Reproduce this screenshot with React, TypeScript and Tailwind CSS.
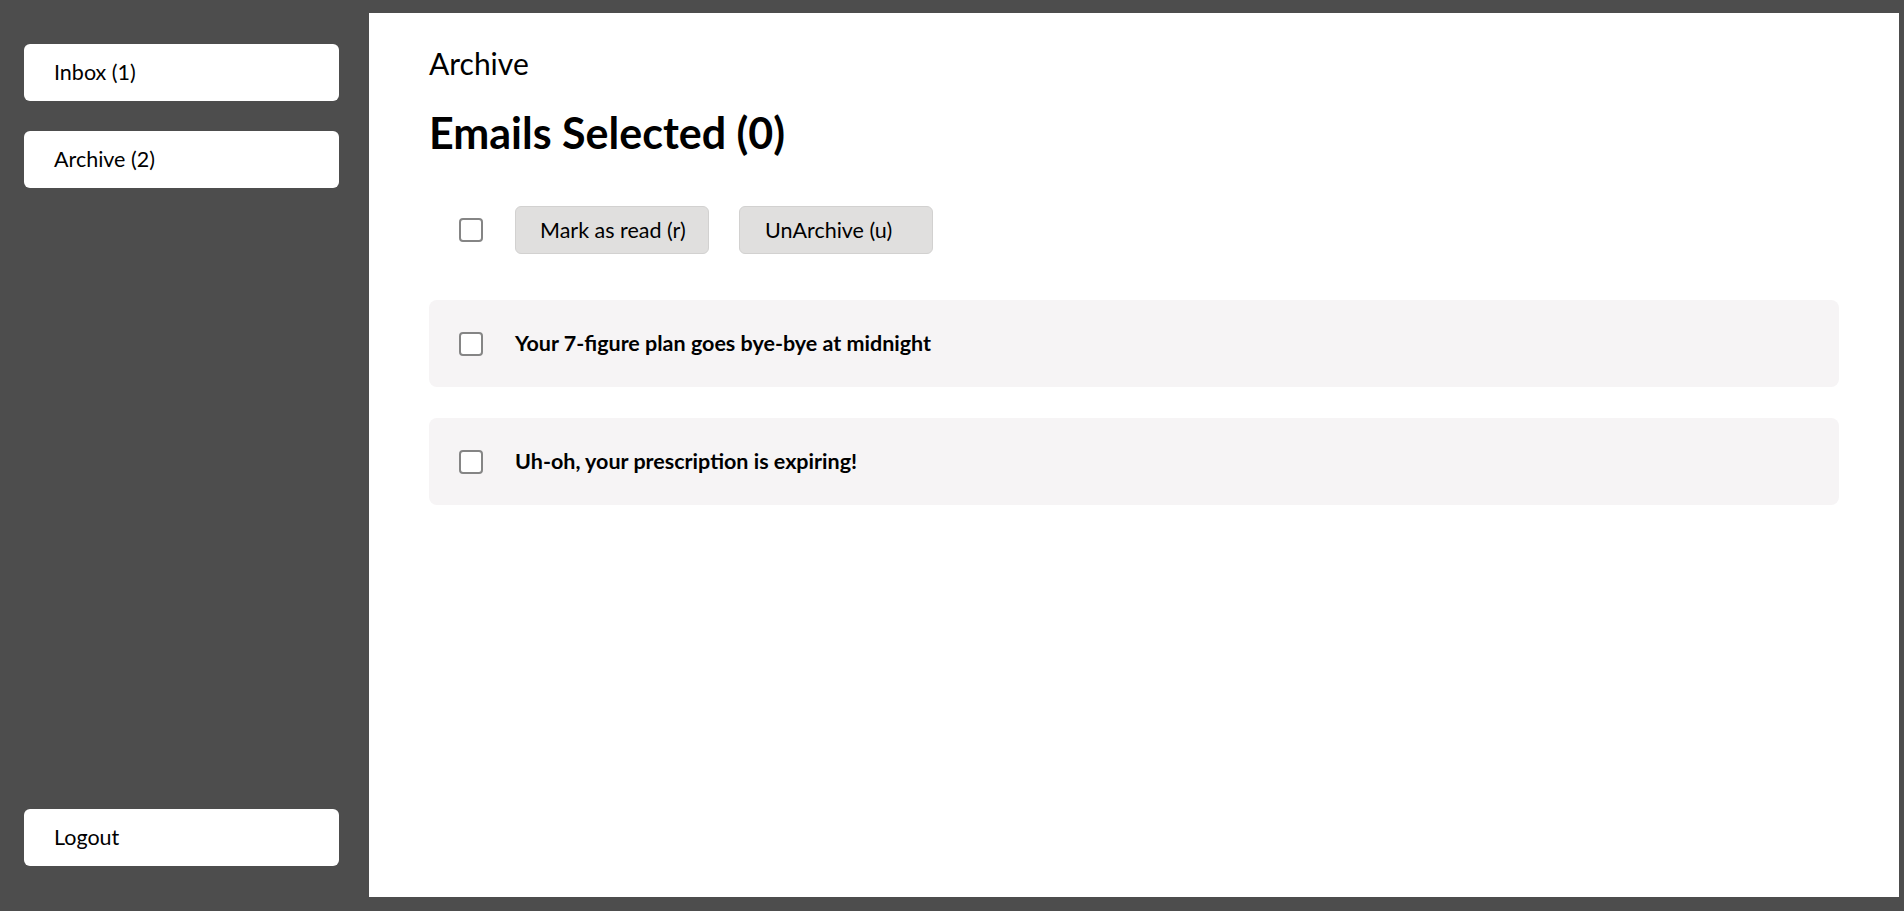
import React, { useState } from 'react';

const emails = [
  { id: 1, subject: 'Your 7-figure plan goes bye-bye at midnight' },
  { id: 2, subject: 'Uh-oh, your prescription is expiring!' },
];

export default function App() {
  const [selected, setSelected] = useState<number[]>([]);

  const toggle = (id: number) =>
    setSelected(s => (s.includes(id) ? s.filter(x => x !== id) : [...s, id]));

  return (
    <div className="h-screen w-full bg-[#4d4d4d] flex font-['Lato',sans-serif] text-black overflow-hidden">
      {/* Sidebar */}
      <aside className="w-[369px] flex-shrink-0 flex flex-col pl-6 pr-[30px] pt-[44px] pb-[45px]">
        <div className="flex flex-col gap-[30px]">
          <SideButton label="Inbox (1)" />
          <SideButton label="Archive (2)" />
        </div>
        <div className="mt-auto">
          <SideButton label="Logout" />
        </div>
      </aside>

      {/* Main */}
      <main className="flex-1 bg-white mt-[13px] mb-[14px] mr-[5px] px-[60px] pt-[35px]">
        <h2 className="text-[30px] leading-none font-normal">Archive</h2>
        <h1 className="text-[43px] leading-none font-bold mt-[33px]">Emails Selected ({selected.length})</h1>

        <div className="flex items-center mt-[52px] pl-[30px]">
          <Check checked={false} onChange={() => setSelected(selected.length ? [] : emails.map(e => e.id))} />
          <button className="ml-[32px] w-[194px] h-[48px] pl-6 text-left text-[21.5px] bg-[#e0dfde] border border-[#d2d1d0] rounded-[6px]">
            Mark as read (r)
          </button>
          <button className="ml-[30px] w-[194px] h-[48px] pl-[25px] text-left text-[21.5px] bg-[#e0dfde] border border-[#d2d1d0] rounded-[6px]">
            UnArchive (u)
          </button>
        </div>

        <div className="flex flex-col gap-[31px] mt-[46px]">
          {emails.map(e => (
            <div key={e.id} className="h-[87px] bg-[#f6f4f5] rounded-[8px] flex items-center pl-[30px]">
              <Check checked={selected.includes(e.id)} onChange={() => toggle(e.id)} />
              <span className="ml-[32px] text-[21.5px] font-bold">{e.subject}</span>
            </div>
          ))}
        </div>
      </main>
    </div>
  );
}

function SideButton({ label }: { label: string }) {
  return (
    <button className="w-full h-[57px] bg-white rounded-[6px] pl-[30px] text-left text-[21.5px]">
      {label}
    </button>
  );
}

function Check({ checked, onChange }: { checked: boolean; onChange: () => void }) {
  return (
    <input
      type="checkbox"
      checked={checked}
      onChange={onChange}
      className="appearance-none w-[24px] h-[24px] flex-shrink-0 bg-white border-2 border-[#858585] rounded-[4px] checked:bg-[#0075ff] checked:border-[#0075ff]"
    />
  );
}
